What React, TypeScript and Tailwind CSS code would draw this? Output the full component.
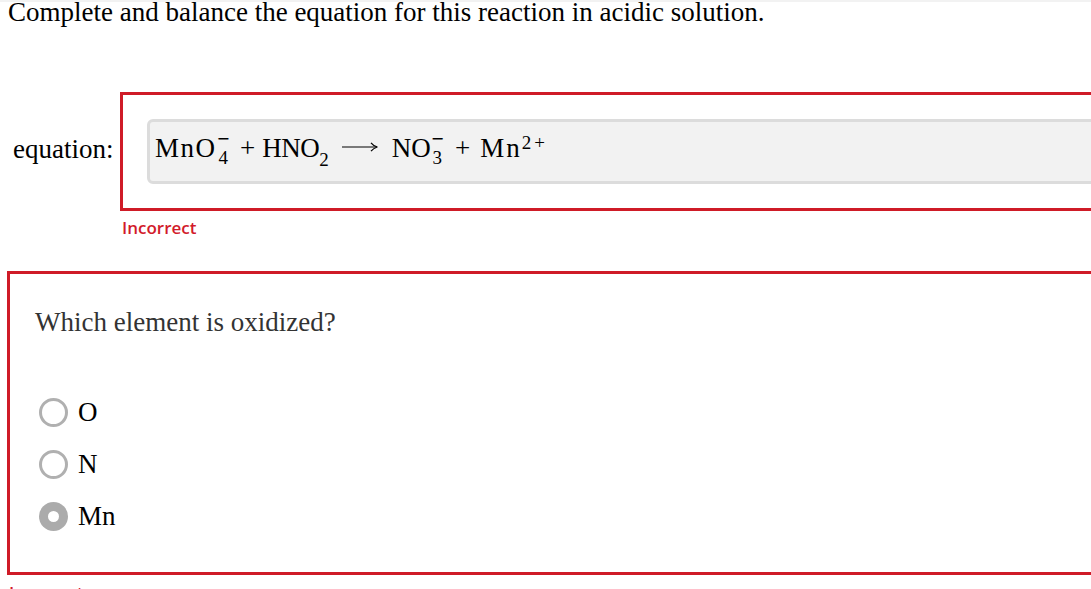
import React from 'react';

const serif = "font-['Liberation_Serif','Times_New_Roman',serif]";

function Stack({ top, bottom }: { top: string; bottom: string }) {
  // superscript over subscript, as MathJax stacks them
  return (
    <span className="inline-block text-[19px] text-center align-[-7px]">
      <span className="block leading-[19px] font-['DejaVu_Sans',sans-serif] text-[16px]">{top}</span>
      <span className="block leading-[19px]">{bottom}</span>
    </span>
  );
}

function Arrow() {
  return (
    <svg width="36" height="12" viewBox="0 0 36 12" className="inline-block align-[4px] ml-[13px]">
      <path d="M0 6 H34.5" stroke="#000" strokeWidth="1.2" fill="none" />
      <path d="M29 1.8 Q31.5 5 35.4 6 Q31.5 7 29 10.2" stroke="#000" strokeWidth="1.2" fill="none" />
    </svg>
  );
}

function Radio({ label, checked }: { label: string; checked?: boolean }) {
  return (
    <div className="flex items-center h-[30px]">
      {checked ? (
        <span className="w-[29px] h-[29px] rounded-full bg-[#ababab] flex items-center justify-center">
          <span className="w-[11px] h-[11px] rounded-full bg-white" />
        </span>
      ) : (
        <span className="w-[29px] h-[29px] rounded-full border-[3px] border-[#b0b0b0] bg-white" />
      )}
      <span className="ml-[10px] text-[27px] leading-[30px] text-black">{label}</span>
    </div>
  );
}

function Feedback({ gap = 'mt-[5px]' }: { gap?: string }) {
  return (
    <p className={`ml-[2px] ${gap} font-['Open_Sans',sans-serif] font-semibold text-[17px] leading-[23px] text-[#d21a2a]`}>
      Incorrect
    </p>
  );
}

export default function App() {
  return (
    <div className={`${serif} w-full h-[589px] overflow-hidden bg-white border-t-2 border-[#f2f2f2]`}>
      <h1 className="pl-[8px] text-[27px] leading-[21px] text-black">
        Complete and balance the equation for this reaction in acidic solution.
      </h1>

      {/* equation row */}
      <div className="flex items-start mt-[69px] pl-[13px]">
        <span className="w-[107px] shrink-0 mt-[42px] text-[27px] leading-[30px] text-black">equation:</span>
        <div>
          <div className="w-[1040px] border-[3px] border-[#cf1b27] p-6">
            <div className="h-[65px] rounded-md border-[3px] border-[#dcdcdc] bg-[#f2f2f2] pl-[5px] pt-[6px] whitespace-nowrap text-[27px] leading-[30px] text-black">
              <span className="tracking-[1.5px]">MnO</span>
              <Stack top="−" bottom="4" />
              <span className="ml-[10px]">+</span>
              <span className="ml-[7px] tracking-[-0.5px]">HNO</span>
              <span className="text-[19px] align-[-9px]">2</span>
              <Arrow />
              <span className="ml-[14px]">NO</span>
              <Stack top="−" bottom="3" />
              <span className="ml-[11px]">+</span>
              <span className="ml-[10px] tracking-[2px]">Mn</span>
              <span className="text-[19px] align-[8px]">2</span>
              <span className="ml-[3px] text-[19px] align-[8px]">+</span>
            </div>
          </div>
          <Feedback />
        </div>
      </div>

      {/* multiple choice */}
      <div className="pl-[7px] mt-[32px]">
        <div className="w-[1100px] border-[3px] border-[#cf1b27] pt-[33px] pb-[41px] pl-[25px]">
          <p className="text-[27px] leading-[30px] text-[#333333]">Which element is oxidized?</p>
          <div className="mt-[60px] ml-[4px] flex flex-col gap-[22px]">
            <Radio label="O" />
            <Radio label="N" />
            <Radio label="Mn" checked />
          </div>
        </div>
        <Feedback gap="mt-[6px]" />
      </div>
    </div>
  );
}
